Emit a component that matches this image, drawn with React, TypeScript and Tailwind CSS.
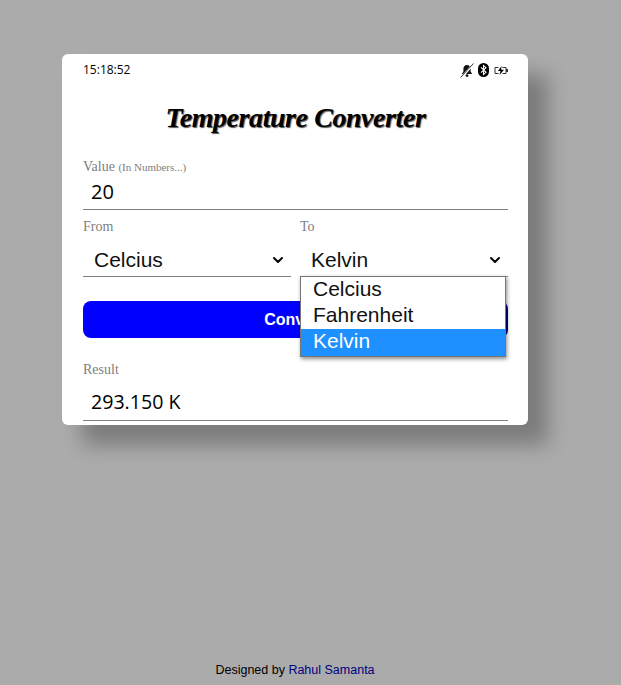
import { ChevronDown } from "lucide-react";

function StatusIcons() {
    return (
        <div className="flex items-center gap-[3px] pr-[0px]">
            {/* muted bell */}
            <svg width="14" height="15" viewBox="0 0 14 15">
                <path d="M7 2c-2.4 0-3.6 1.8-3.6 4v2.6L1.8 11h10.4l-1.6-2.4V6c0-2.2-1.2-4-3.6-4z" fill="#111" />
                <circle cx="7" cy="12.6" r="1.4" fill="#111" />
                <path d="M1 15 13.5 1" stroke="#fff" strokeWidth="2.2" />
                <path d="M.6 14.5 13.4 .5" stroke="#333" strokeWidth="1" />
            </svg>
            {/* bluetooth */}
            <svg className="ml-[1px]" width="11" height="14" viewBox="0 0 11 14">
                <rect x="0" y="0" width="11" height="14" rx="5.5" fill="#000" />
                <path d="M3 4.4 8 9.3 5.5 11.6V2.4L8 4.7 3 9.6" fill="none" stroke="#fff" strokeWidth="1.1" />
            </svg>
            {/* battery charging */}
            <svg className="ml-[2px]" width="14" height="9" viewBox="0 0 14 9">
                <path d="M4.5 1.5H1v6h3.5M8.5 1.5H12v6H8.5" fill="none" stroke="#333" strokeWidth="1" />
                <rect x="12" y="3" width="2" height="3" fill="#333" />
                <path d="M7.5 0 4 5h2.5L5.5 9 10 3.8H7.2z" fill="#000" />
            </svg>
        </div>
    );
}

function Label({ children }: { children: React.ReactNode }) {
    return <div className="font-['Liberation_Serif',serif] text-[14px] leading-[16px] text-[#808080]">{children}</div>;
}

function SelectBox({ value }: { value: string }) {
    return (
        <div className="flex h-[34px] items-center justify-between border-b border-[#808080] pl-[11px] pr-[5px] text-[21px] text-[#111]">
            <span>{value}</span>
            <ChevronDown size={16} strokeWidth={3} className="text-black" />
        </div>
    );
}

export default function App() {
    return (
        <div className="flex h-[685px] flex-col overflow-hidden bg-[#ababab] font-['Liberation_Sans',sans-serif]">
            <div className="ml-[62px] mt-[54px] h-[371px] w-[466px] rounded-[6px] bg-white pl-[21px] pr-[20px] pt-[8px] shadow-[20px_20px_20px_rgba(0,0,0,0.28)]">
                <div className="flex h-[16px] items-center justify-between">
                    <span className="font-['Open_Sans',sans-serif] text-[12px] text-black">15:18:52</span>
                    <StatusIcons />
                </div>

                <h1 className="mt-[22px] text-center font-['Liberation_Serif',serif] text-[28px] font-bold italic leading-[36px] tracking-[-0.43px] text-black [text-shadow:1px_1px_1px_#555]">
                    Temperature Converter
                </h1>

                <div className="mt-[23px]">
                    <Label>
                        Value <span className="text-[11px]">(In Numbers...)</span>
                    </Label>
                    <div className="flex h-[35px] items-center border-b border-[#808080] pl-[8px] font-['Open_Sans',sans-serif] text-[20px] text-black">
                        20
                    </div>
                </div>

                <div className="relative mt-[9px] grid grid-cols-[208px_208px] gap-x-[9px]">
                    <div>
                        <Label>From</Label>
                        <div className="mt-[8px]">
                            <SelectBox value="Celcius" />
                        </div>
                    </div>
                    <div>
                        <Label>To</Label>
                        <div className="mt-[8px]">
                            <SelectBox value="Kelvin" />
                        </div>
                    </div>

                    {/* open dropdown list */}
                    <div className="absolute left-[217px] top-[57px] z-10 w-[206px] border border-[#767676] bg-white text-[21px] leading-[24px] text-[#111] shadow-[1px_2px_4px_rgba(0,0,0,0.45)]">
                        <div className="h-[26px] pl-[12px]">Celcius</div>
                        <div className="h-[26px] pl-[12px]">Fahrenheit</div>
                        <div className="h-[27px] bg-[#1e90ff] pl-[12px] text-white">Kelvin</div>
                    </div>
                </div>

                <button className="mt-[24px] block h-[37px] w-[425px] rounded-[8px] border-r-2 border-[#000080] bg-[#0000ff] text-center text-[16px] font-bold text-white">
                    Convert
                </button>

                <div className="mt-[24px]">
                    <Label>Result</Label>
                    <div className="mt-[6px] flex h-[37px] items-center border-b border-[#808080] pl-[8px] font-['Open_Sans',sans-serif] text-[19.6px] text-black">
                        293.150 K
                    </div>
                </div>
            </div>

            <div className="ml-[62px] mt-auto w-[466px] pb-[7px] text-center text-[12.5px] leading-[16px] text-black">
                Designed by <span className="text-[#000080]">Rahul Samanta</span>
            </div>
        </div>
    );
}
